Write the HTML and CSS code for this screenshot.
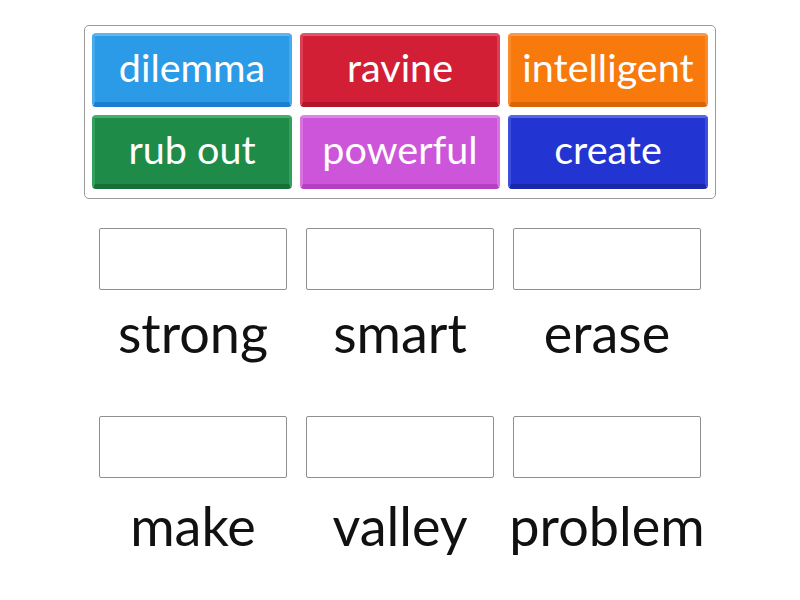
FILE: index.html
```html
<!DOCTYPE html>
<html>
<head>
<meta charset="utf-8">
<link rel="stylesheet" href="styles.css">
</head>
<body>
<div class="page">
  <div class="bank">
    <div class="tile blue">dilemma</div>
    <div class="tile red">ravine</div>
    <div class="tile orange">intelligent</div>
    <div class="tile green">rub out</div>
    <div class="tile purple">powerful</div>
    <div class="tile navy">create</div>
  </div>
  <div class="targets">
    <div class="cell"><div class="slot"></div><div class="label">strong</div></div>
    <div class="cell"><div class="slot"></div><div class="label">smart</div></div>
    <div class="cell"><div class="slot"></div><div class="label">erase</div></div>
    <div class="cell low"><div class="slot"></div><div class="label">make</div></div>
    <div class="cell low"><div class="slot"></div><div class="label">valley</div></div>
    <div class="cell low"><div class="slot"></div><div class="label">problem</div></div>
  </div>
</div>
</body>
</html>
```
FILE: styles.css
```css
html, body {
  margin: 0;
  padding: 0;
  background: #ffffff;
}
body {
  font-family: Lato, "Open Sans", sans-serif;
}
.page {
  width: 800px;
  height: 600px;
  display: flex;
  flex-direction: column;
  align-items: center;
  padding-top: 25px;
  box-sizing: border-box;
}
.bank {
  width: 632px;
  box-sizing: border-box;
  border: 1px solid #9a9a9a;
  border-radius: 5px;
  padding: 7px 7px 9px 7px;
  display: grid;
  grid-template-columns: repeat(3, 200px);
  grid-auto-rows: 74px;
  column-gap: 8px;
  row-gap: 8px;
}
.tile {
  box-sizing: border-box;
  border-radius: 4px;
  border-style: solid;
  border-width: 3px 3px 5px 3px;
  color: #ffffff;
  font-size: 39.5px;
  display: flex;
  align-items: center;
  justify-content: center;
  line-height: 1;
  padding-bottom: 5px;
}
.blue { background: #2b9be8; border-color: #5cb6f0 #47aaed #1a7fcf #47aaed; }
.red { background: #d31f36; border-color: #e2546a #dc3f54 #b2152a #dc3f54; }
.orange { background: #f97a0c; border-color: #fb9a46 #fa8b2c #d96507 #fa8b2c; }
.green { background: #1e8c48; border-color: #45b06e #33a05d #17703a #33a05d; }
.purple { background: #cd55d9; border-color: #de86e6 #d673df #b53ec2 #d673df; }
.navy { background: #2235d2; border-color: #5566e2 #3c4edb #1a28ad #3c4edb; }

.targets {
  margin-top: 29px;
  display: grid;
  grid-template-columns: repeat(3, 188px);
  column-gap: 19px;
}
.cell {
  display: flex;
  flex-direction: column;
  align-items: center;
  height: 188px;
}
.slot {
  width: 188px;
  height: 62px;
  box-sizing: border-box;
  border: 1px solid #8f8f8f;
  border-radius: 2px;
  flex-shrink: 0;
}
.label {
  font-size: 54px;
  line-height: 70px;
  margin-top: 8px;
  color: #111111;
  white-space: nowrap;
}
.cell.low .label {
  margin-top: 13px;
}
```
